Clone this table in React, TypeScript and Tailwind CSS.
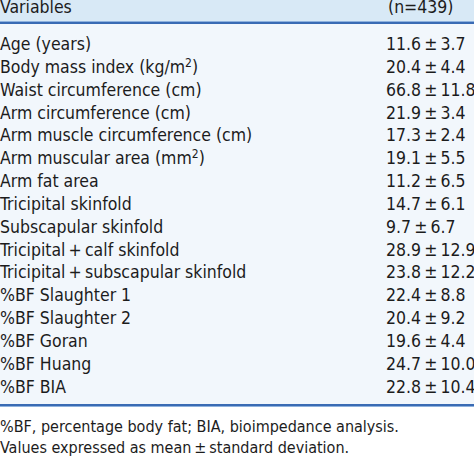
import React from "react";

const pm = "\u2009±\u2009";
const plus = "\u2009+\u2009";

const rows: [React.ReactNode, string][] = [
  ["Age (years)", `11.6${pm}3.7`],
  [
    <>
      Body mass index (kg/m<sup className="text-[12px]">2</sup>)
    </>,
    `20.4${pm}4.4`,
  ],
  ["Waist circumference (cm)", `66.8${pm}11.8`],
  ["Arm circumference (cm)", `21.9${pm}3.4`],
  ["Arm muscle circumference (cm)", `17.3${pm}2.4`],
  [
    <>
      Arm muscular area (mm<sup className="text-[12px]">2</sup>)
    </>,
    `19.1${pm}5.5`,
  ],
  ["Arm fat area", `11.2${pm}6.5`],
  ["Tricipital skinfold", `14.7${pm}6.1`],
  ["Subscapular skinfold", `9.7${pm}6.7`],
  [`Tricipital${plus}calf skinfold`, `28.9${pm}12.9`],
  [`Tricipital${plus}subscapular skinfold`, `23.8${pm}12.2`],
  ["%BF Slaughter 1", `22.4${pm}8.8`],
  ["%BF Slaughter 2", `20.4${pm}9.2`],
  ["%BF Goran", `19.6${pm}4.4`],
  ["%BF Huang", `24.7${pm}10.0`],
  ["%BF BIA", `22.8${pm}10.4`],
];

export default function App() {
  return (
    <div
      className="w-[474px] h-[457px] overflow-hidden bg-white text-[#1c1c1c] text-[17.5px] whitespace-nowrap"
      style={{ fontFamily: '"DejaVu Sans Condensed", "DejaVu Sans", sans-serif' }}
    >
      {/* Header */}
      <div className="grid grid-cols-[388px_1fr] h-[21px] leading-[15px] bg-[#d8e9f6]">
        <div>Variables</div>
        <div>(n=439)</div>
      </div>
      <div className="h-[1px] bg-[#8fb2de]" />
      <div className="h-[2px] bg-[#3a6bb4]" />

      {/* Body */}
      <div className="bg-[#f2f7fc] pt-[9px] pb-[5px]">
        {rows.map(([label, value], i) => (
          <div key={i} className="grid grid-cols-[386px_1fr] leading-[22.85px]">
            <div>{label}</div>
            <div>{value}</div>
          </div>
        ))}
      </div>
      <div className="h-[2px] bg-[#3a6bb4]" />
      <div className="h-[1px] bg-[#8fb2de]" />

      {/* Footnote */}
      <div className="pt-[9px] leading-[21px] text-[16px]">
        <div>%BF, percentage body fat; BIA, bioimpedance analysis.</div>
        <div>{`Values expressed as mean${pm}standard deviation.`}</div>
      </div>
    </div>
  );
}
